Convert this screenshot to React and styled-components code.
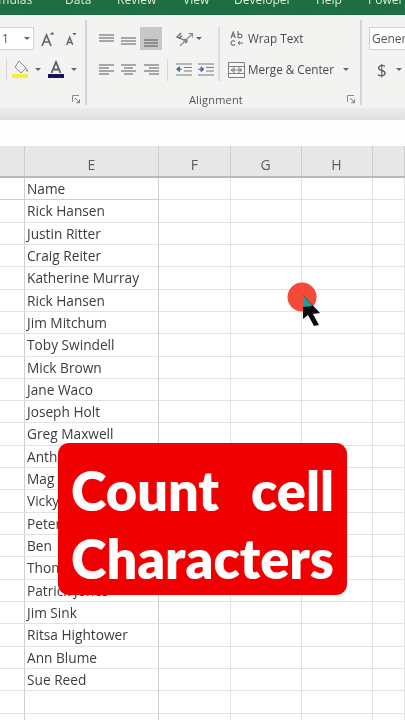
import React from "react";
import styled, { createGlobalStyle } from "styled-components";

const names = [
  "Name", "Rick Hansen", "Justin Ritter", "Craig Reiter", "Katherine Murray", "Rick Hansen",
  "Jim Mitchum", "Toby Swindell", "Mick Brown", "Jane Waco", "Joseph Holt", "Greg Maxwell",
  "Anth", "Mag", "Vicky", "Peter", "Ben", "Thom", "Patrick Jones", "Jim Sink",
  "Ritsa Hightower", "Ann Blume", "Sue Reed", "", "",
];

const tabs = [
  ["Formulas", 85], ["Data", 52], ["Review", 66], ["View", 51], ["Developer", 82], ["Help", 52], ["Power", 60],
];

const GlobalStyle = createGlobalStyle`
  html, body { margin: 0; padding: 0; background: #fff; }
  body { width: 405px; height: 720px; overflow: hidden; font-family: "Open Sans", "Liberation Sans", sans-serif; }
`;

const Page = styled.div`
  position: relative;
  width: 405px;
  height: 720px;
  overflow: hidden;
  background: #fff;
`;

const Blurred = styled.div`
  filter: blur(0.45px);
`;

const TabBar = styled.div`
  height: 15px;
  background: #1f6e43;
  display: flex;
  align-items: flex-end;
  overflow: hidden;
  padding: 0 0 7px 0;
  box-sizing: border-box;
  margin-left: -20px;
  width: 445px;
`;

const Tab = styled.span`
  flex: 0 0 ${(p) => p.$w}px;
  color: #d9e8df;
  font-size: 12px;
  line-height: 16px;
  white-space: nowrap;
`;

const Ribbon = styled.div`
  height: 93px;
  background: #f3f3f2;
  display: flex;
  overflow: hidden;
`;

const Group = styled.div`
  flex: 0 0 ${(p) => p.$w}px;
  box-sizing: border-box;
  border-right: ${(p) => (p.$end ? "none" : "2px solid #d4d4d4")};
  margin: 5px 0 3px;
  display: flex;
  flex-direction: column;
`;

const GroupBody = styled.div`
  flex: 1;
  display: flex;
  padding-top: 7px;
`;

const Stack = styled.div`
  flex: ${(p) => (p.$w ? `0 0 ${p.$w}px` : "1")};
  display: flex;
  flex-direction: column;
  gap: 8px;
  box-sizing: border-box;
  padding-left: ${(p) => p.$pad || 0}px;
  height: 54px;
  border-right: ${(p) => (p.$line ? "2px solid #dcdcdc" : "none")};
`;

const Line = styled.div`
  height: 23px;
  display: flex;
  align-items: center;
  padding-left: ${(p) => p.$pad || 0}px;
`;

const Gap = styled.span`
  flex: 0 0 ${(p) => p.$w}px;
  height: ${(p) => (p.$rule ? "22px" : "1px")};
  display: flex;
  justify-content: center;
  &::after {
    content: "";
    width: ${(p) => (p.$rule ? "1px" : "0")};
    background: #d6d6d6;
  }
`;

const SelectBox = styled.div`
  flex: 0 0 ${(p) => p.$w}px;
  height: 23px;
  box-sizing: border-box;
  background: #fff;
  border: 1px solid #d2d2d2;
  border-left-width: ${(p) => (p.$flushLeft ? 0 : 1)}px;
  border-right-width: ${(p) => (p.$flushRight ? 0 : 1)}px;
  display: flex;
  align-items: center;
  justify-content: space-between;
  padding: 0 3px 0 2px;
  font-size: 12px;
  color: #555;
  overflow: hidden;
  white-space: nowrap;
`;

const Caret = styled.span`
  flex: none;
  margin-left: ${(p) => p.$left || 0}px;
  width: 0;
  height: 0;
  border-left: 3px solid transparent;
  border-right: 3px solid transparent;
  border-top: 3px solid #666;
`;

const Selected = styled.div`
  flex: 0 0 22px;
  height: 23px;
  background: #c8c8c8;
  display: flex;
  align-items: flex-end;
  justify-content: center;
  padding-bottom: 3px;
  box-sizing: border-box;
`;

const Label = styled.span`
  font-size: 11.7px;
  color: #4a4a4a;
  white-space: nowrap;
  margin: -2px 0 0 ${(p) => p.$left || 0}px;
`;

const Dollar = styled.span`
  font-size: 17px;
  color: #555;
  margin-right: 9px;
`;

const GroupFoot = styled.div`
  height: 11px;
  display: flex;
  align-items: center;
  justify-content: flex-end;
  padding-right: 4px;
`;

const FootTitle = styled.span`
  font-size: 11px;
  color: #555;
  letter-spacing: 0.2px;
  margin-right: 104px;
`;

const Band = styled.div`
  height: 12px;
  background: linear-gradient(#ececec, #e0e0e0);
`;

const FormulaBar = styled.div`
  height: 26px;
  background: #fdfdfd;
`;

const columns = "25px 134px 71.5px 71px 71px 32.5px";

const Sheet = styled.div`
  display: grid;
  grid-template-columns: ${columns};
  grid-auto-rows: 22.32px;
`;

const Head = styled.div`
  height: 32px;
  display: grid;
  grid-template-columns: ${columns};
  background: #e7e7e7;
  border-bottom: 2px solid #b9b9b9;
  box-sizing: border-box;
`;

const HeadCell = styled.div`
  display: flex;
  align-items: center;
  justify-content: center;
  padding-top: 6px;
  font-size: 14px;
  color: #5b5b5b;
  border-right: 1px solid #cdcdcd;
`;

const Cell = styled.div`
  box-sizing: border-box;
  border-bottom: 1px solid ${(p) => (p.$first ? "#cfcfcf" : "#e2e2e2")};
  border-right: 1px solid ${(p) => (p.$gutter ? "#cfcfd4" : "#e2e2e2")};
  padding-left: 2px;
  font-size: 13.7px;
  line-height: 21px;
  color: #3c3c3c;
  white-space: nowrap;
  overflow: hidden;
`;

const Badge = styled.div`
  position: absolute;
  left: 58px;
  top: 443px;
  width: 289px;
  height: 152px;
  box-sizing: border-box;
  padding: 14px 13px 0;
  background: #f00000;
  border-radius: 11px;
  color: #fff;
  font-family: Lato, sans-serif;
  font-weight: 800;
  font-size: 54px;
  line-height: 68px;
`;

const BadgeLine = styled.div`
  text-align: justify;
  text-align-last: justify;
  white-space: nowrap;
`;

const Pointer = styled.svg`
  position: absolute;
  left: 286px;
  top: 281px;
`;

const Stroke = ({ rows, w = 15, h = 12, color = "#7d7d7d" }) => (
  <svg width={w} height={h} viewBox={`0 0 ${w} ${h}`}>
    {rows.map(([x1, x2, y], i) => (
      <path key={i} d={`M${x1} ${y}H${x2}`} stroke={color} strokeWidth="1.3" />
    ))}
  </svg>
);

const Launcher = () => (
  <svg width="9" height="9" viewBox="0 0 9 9">
    <path d="M.5 7V.5H7" fill="none" stroke="#8a8a8a" />
    <path d="M3 3l4 4M7.5 4.5v3.2H4.3" fill="none" stroke="#777" />
  </svg>
);

const GrowA = ({ big }) => (
  <svg width={big ? 14 : 12} height="16" viewBox="0 0 14 16">
    <path d={big ? "M1 15L5.5 4 10 15M2.8 11h5.4" : "M2 15L5.5 6 9 15M3.3 12h4.4"} fill="none" stroke="#666" strokeWidth="1.7" />
    <path d={big ? "M9 3.5l2.2-2.5 2.2 2.5z" : "M8.5 1h5L11 3.7z"} fill="#555" />
  </svg>
);

const FillColor = () => (
  <svg width="18" height="19" viewBox="0 0 18 19">
    <path d="M7 1l7 7-5 5-6-6z" fill="#f4f4f4" stroke="#8a8a8a" />
    <path d="M14.5 8c1 1.5 2 2.8 1.3 3.6-.8.6-1.8-.4-1.5-1.5z" fill="#7a86a0" />
    <rect x="0" y="14" width="16" height="4" rx="1" fill="#f3ee3c" />
  </svg>
);

const FontColor = () => (
  <svg width="16" height="19" viewBox="0 0 16 19">
    <path d="M3.5 13L8 2l4.500 11M5 9.500h6" fill="none" stroke="#5a5f6e" strokeWidth="1.8" />
    <rect x="0" y="14" width="16" height="4" fill="#17125f" />
  </svg>
);

const Orientation = () => (
  <svg width="18" height="16" viewBox="0 0 18 16">
    <path d="M6 2L2 6l7 3M3.800 7.500l3-3M9 10c0-1.500 1.500-2 2.500-1s0 3-1.500 2.500" fill="none" stroke="#666" strokeWidth="1.300" />
    <path d="M5 15L17 3M13.500 2.500H17.500V6.500" fill="none" stroke="#8a8a8a" strokeWidth="1.200" />
  </svg>
);

const Indent = ({ flip }) => (
  <svg width="18" height="13" viewBox="0 0 18 13">
    <path d="M1 1h16M9 4.500h8M9 8h8M1 12h16" stroke="#7d7d7d" strokeWidth="1.200" />
    <path d={flip ? "M1 6.200h5M4 3.800l3 2.400-3 2.400z" : "M7 6.200H2M4.500 3.800l-3 2.400 3 2.400z"} fill="#3f6fae" stroke="#3f6fae" />
  </svg>
);

const WrapIcon = () => (
  <svg width="14" height="17" viewBox="0 0 14 17">
    <path d="M1 8l2.200-6L5.400 8M1.800 6h2.800M8 1v7M8 5c1-1.500 4-1.500 4 .8S9 8.500 8 7" fill="none" stroke="#666" strokeWidth="1.100" />
    <path d="M5 11.500C3 10 1 11 1 13s2.500 3 4 1.500" fill="none" stroke="#666" strokeWidth="1.100" />
    <path d="M8 13h5M10 11l-2 2 2 2" fill="none" stroke="#3f6fae" strokeWidth="1" />
  </svg>
);

const MergeIcon = () => (
  <svg width="17" height="16" viewBox="0 0 17 16">
    <path d="M.5.500h16v15H.5zM.5 4.500h16M.5 11.500h16M6 4.500v7M11 4.500v7" fill="#f8f8f8" stroke="#7f7f7f" />
    <path d="M3 8h11M5 6.500L3 8l2 1.500M12 6.500L14 8l-2 1.500" fill="none" stroke="#6a7f9a" />
  </svg>
);

const App = () => {
  return (
    <Page>
      <GlobalStyle />
      <Blurred>
        <TabBar>
          {tabs.map(([label, w]) => (
            <Tab key={label} $w={w}>{label}</Tab>
          ))}
        </TabBar>
        <Ribbon>
          <Group $w={87}>
            <GroupBody>
              <Stack>
                <Line>
                  <SelectBox $w={34} $flushLeft>
                    1
                    <Caret />
                  </SelectBox>
                  <Gap $w={7} />
                  <GrowA big />
                  <Gap $w={10} />
                  <GrowA />
                </Line>
                <Line>
                  <Gap $w={12} $rule />
                  <FillColor />
                  <Caret $left={5} />
                  <Gap $w={7} />
                  <FontColor />
                  <Caret $left={7} />
                </Line>
              </Stack>
            </GroupBody>
            <GroupFoot>
              <Launcher />
            </GroupFoot>
          </Group>
          <Group $w={275}>
            <GroupBody>
              <Stack $w={133} $line $pad={12}>
                <Line>
                  <Stroke rows={[[0, 15, 2], [0, 15, 5], [0, 15, 8]]} />
                  <Gap $w={7} />
                  <Stroke rows={[[0, 15, 5], [0, 15, 8], [0, 15, 11]]} />
                  <Gap $w={4} />
                  <Selected>
                    <Stroke rows={[[0, 14, 2], [0, 14, 5], [0, 14, 8]]} w={14} h={9} color="#6c6c6c" />
                  </Selected>
                  <Gap $w={13} />
                  <Orientation />
                  <Caret $left={3} />
                </Line>
                <Line>
                  <Stroke rows={[[0, 15, 1], [0, 10, 4], [0, 15, 7], [0, 10, 10]]} />
                  <Gap $w={7} />
                  <Stroke rows={[[0, 15, 1], [3, 12, 4], [0, 15, 7], [3, 12, 10]]} />
                  <Gap $w={8} />
                  <Stroke rows={[[0, 15, 1], [5, 15, 4], [0, 15, 7], [5, 15, 10]]} />
                  <Gap $w={16} $rule />
                  <Indent />
                  <Gap $w={4} />
                  <Indent flip />
                </Line>
              </Stack>
              <Stack $pad={8}>
                <Line $pad={2}>
                  <WrapIcon />
                  <Label $left={4}>Wrap Text</Label>
                </Line>
                <Line>
                  <MergeIcon />
                  <Label $left={3}>Merge &amp; Center</Label>
                  <Caret $left={9} />
                </Line>
              </Stack>
            </GroupBody>
            <GroupFoot>
              <FootTitle>Alignment</FootTitle>
              <Launcher />
            </GroupFoot>
          </Group>
          <Group $w={43} $end>
            <GroupBody>
              <Stack $pad={7}>
                <Line>
                  <SelectBox $w={36} $flushRight>Gener</SelectBox>
                </Line>
                <Line $pad={8}>
                  <Dollar>$</Dollar>
                  <Caret />
                </Line>
              </Stack>
            </GroupBody>
          </Group>
        </Ribbon>
        <Band />
        <FormulaBar />
        <Head>
          <HeadCell />
          <HeadCell>E</HeadCell>
          <HeadCell>F</HeadCell>
          <HeadCell>G</HeadCell>
          <HeadCell>H</HeadCell>
          <HeadCell />
        </Head>
        <Sheet>
          {names.map((name, i) => (
            <React.Fragment key={i}>
              <Cell $gutter $first={i === 0} />
              <Cell $gutter $first={i === 0}>{name}</Cell>
              <Cell />
              <Cell />
              <Cell />
              <Cell />
            </React.Fragment>
          ))}
        </Sheet>
      </Blurred>
      <Pointer width="40" height="50" viewBox="0 0 40 50">
        <circle cx="16" cy="16" r="14.500" fill="#f44b38" />
        <path d="M17 14l17 18-7 1 6 11-5 1-6-11-5 4z" fill="#0c0c10" />
        <path d="M17 14l10 11-10 1z" fill="#1e9ea0" />
      </Pointer>
      <Badge>
        <BadgeLine>Count cell</BadgeLine>
        <BadgeLine>Characters</BadgeLine>
      </Badge>
    </Page>
  );
};

export default App;
